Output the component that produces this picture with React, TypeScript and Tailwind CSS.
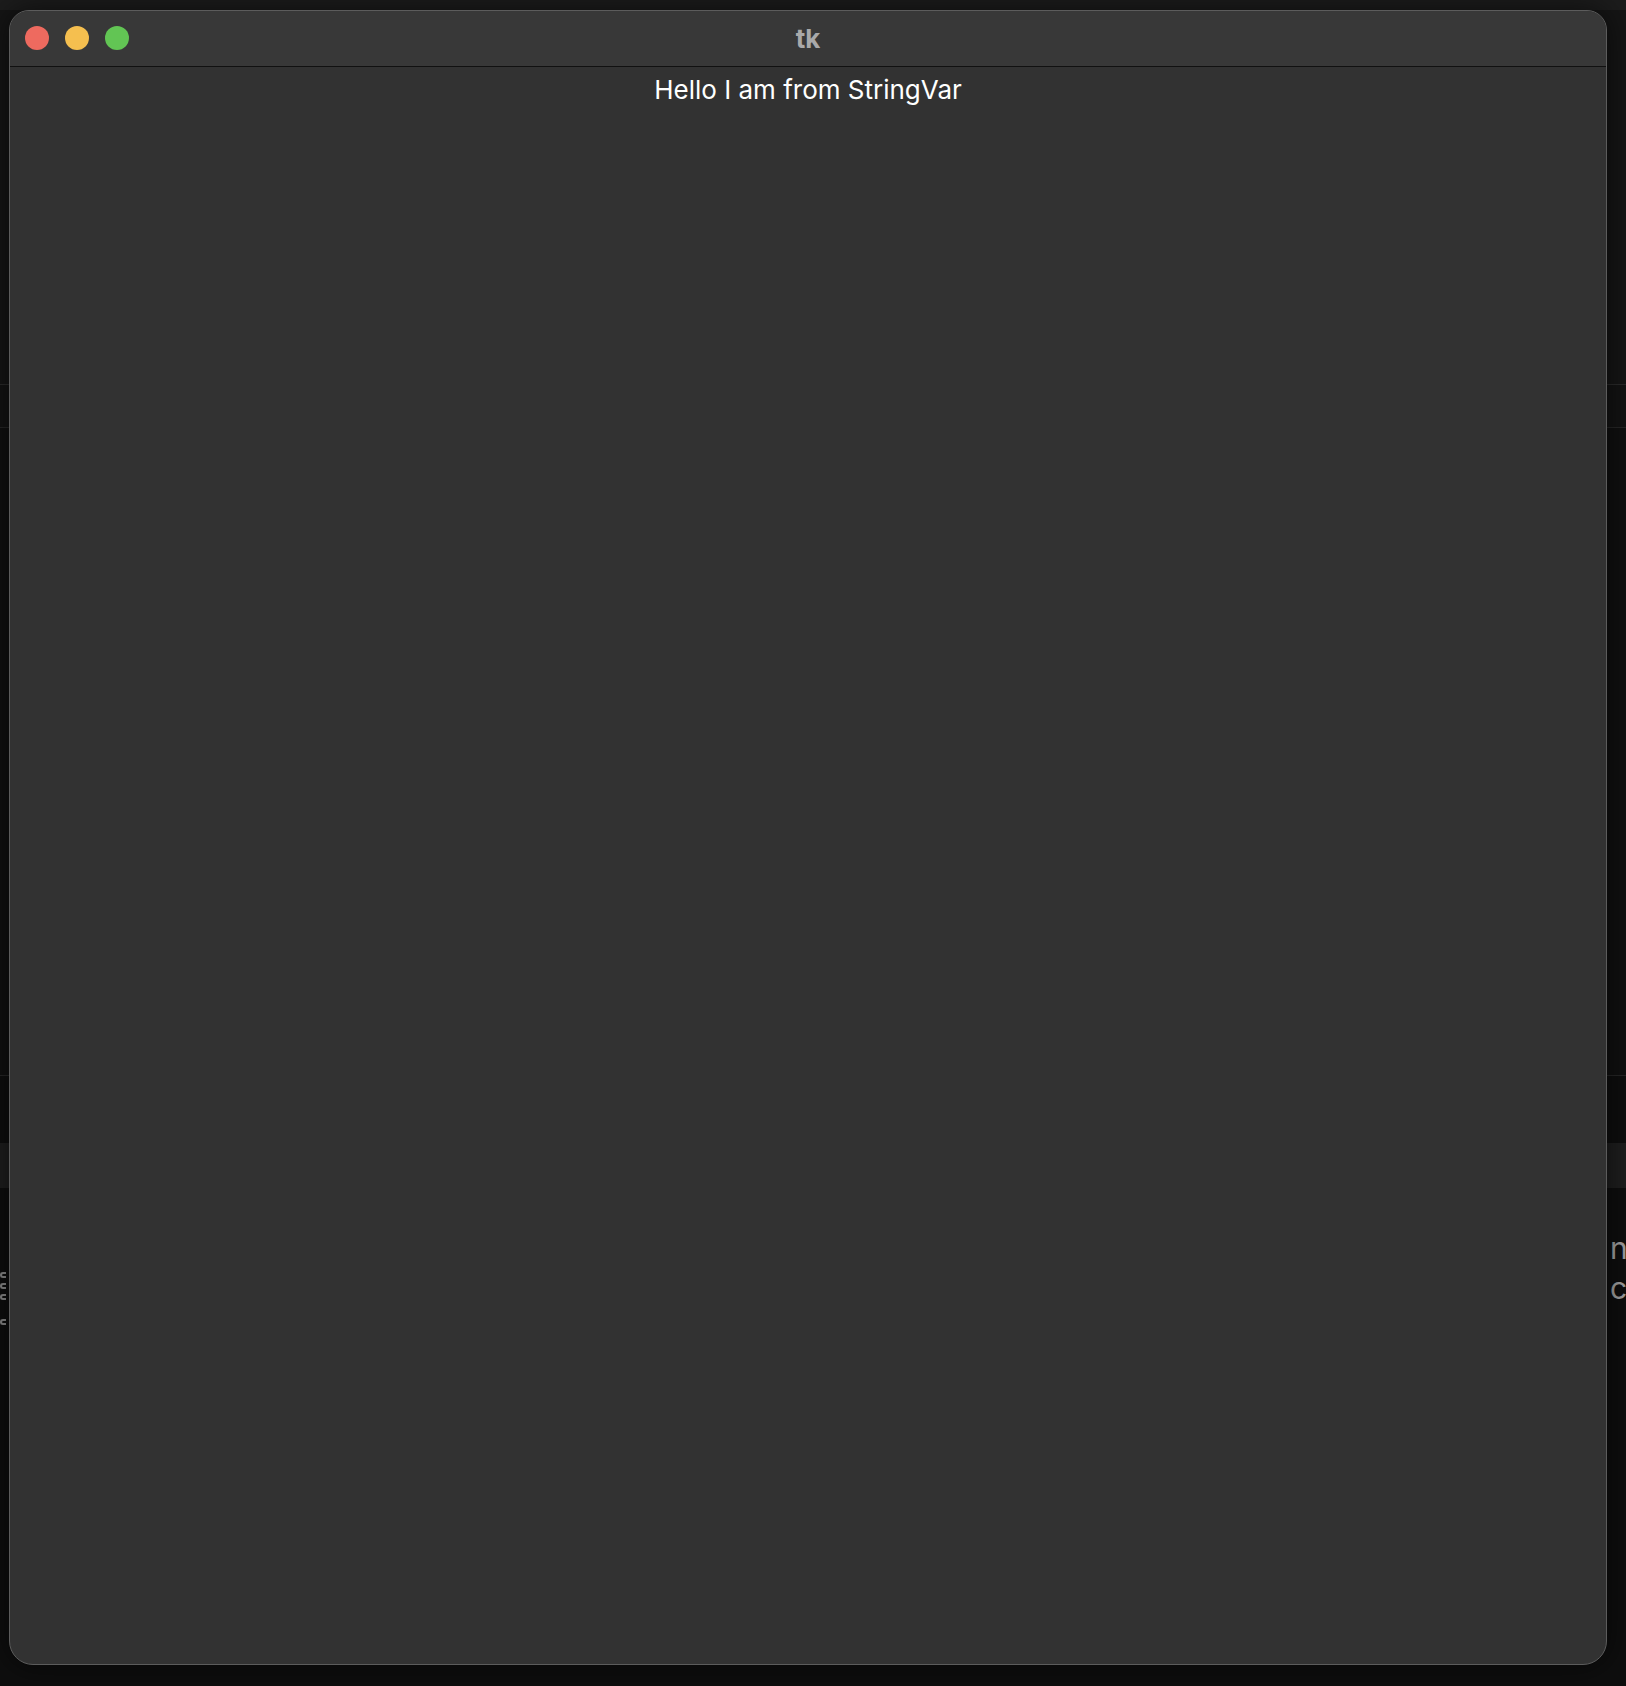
export default function App() {
  return (
    <div className="relative h-[1686px] w-[1626px] overflow-hidden bg-[#0f0f0f] font-['Inter',sans-serif]">
      {/* desktop behind the window */}
      <div className="flex h-full w-full flex-col">
        <div className="h-[10px] bg-[#1c1c1c]" />
        <div className="h-[374px] bg-[#151515]" />
        <div className="h-px bg-[#2a2a2a]" />
        <div className="h-[42px] bg-[#131313]" />
        <div className="h-px bg-[#262626]" />
        <div className="h-[647px] bg-[#101010]" />
        <div className="h-px bg-[#262626]" />
        <div className="h-[67px] bg-[#0e0e0e]" />
        <div className="h-[45px] bg-[#1e1e1e]" />
        <div className="flex h-[170px] justify-between bg-[#0e0e0e]">
          <div className="mt-[84px] flex w-[7px] flex-col gap-[5px]">
            <div className="h-[6px] w-[6px] rounded-l-sm border-2 border-r-0 border-[#8a8a8a]" />
            <div className="h-[6px] w-[6px] rounded-l-sm border-2 border-r-0 border-[#8a8a8a]" />
            <div className="h-[6px] w-[6px] rounded-l-sm border-2 border-r-0 border-[#8a8a8a]" />
            <div className="mt-[14px] h-[6px] w-[6px] rounded-l-sm border-2 border-r-0 border-[#8a8a8a]" />
          </div>
          <div className="mt-[40px] w-[16px] overflow-hidden">
            <div className="text-[30px] leading-[40px] text-[#a0a0a0]">n</div>
            <div className="text-[30px] leading-[40px] text-[#a0a0a0]">c</div>
          </div>
        </div>
        <div className="flex-1 bg-[#0e0e0e]" />
      </div>

      {/* tk window */}
      <div className="absolute left-[9px] top-[10px] flex h-[1655px] w-[1598px] flex-col overflow-hidden rounded-t-[20px] rounded-b-[24px] border border-[#5c5c5c] bg-[#323232] shadow-[0_0_30px_rgba(0,0,0,0.6)]">
        <div className="relative flex h-[56px] shrink-0 items-center justify-center border-b border-[#111111] bg-[#383838]">
          <div className="absolute left-[15px] top-[15px] flex gap-[16px]">
            <span className="h-[24px] w-[24px] rounded-full bg-[#ee6a5f]" />
            <span className="h-[24px] w-[24px] rounded-full bg-[#f5bf4f]" />
            <span className="h-[24px] w-[24px] rounded-full bg-[#62c554]" />
          </div>
          <span className="text-[26px] font-bold text-[#a9a9a9]">tk</span>
        </div>
        <div className="flex flex-1 flex-col items-center pt-[8px]">
          <span className="text-[26px] leading-[30px] text-white">Hello I am from StringVar</span>
        </div>
      </div>
    </div>
  );
}
